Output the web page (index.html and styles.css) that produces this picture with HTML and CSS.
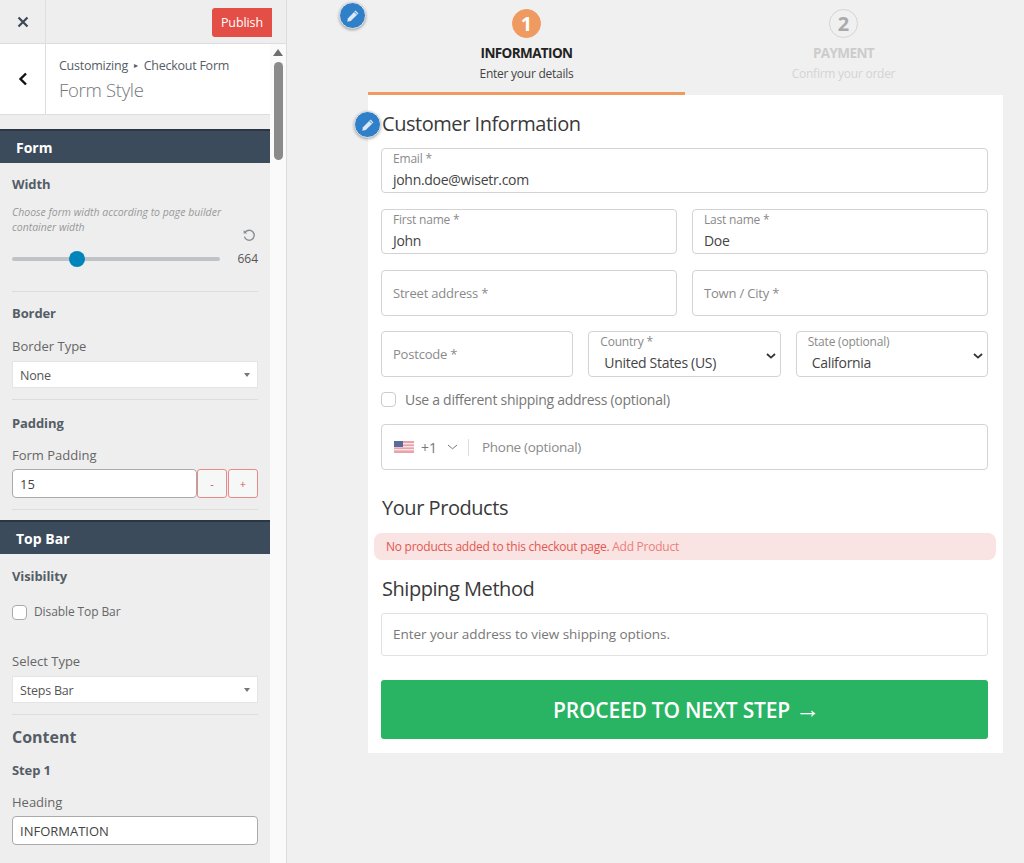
FILE: index.html
```html
<!DOCTYPE html>
<html lang="en">
<head>
  <meta charset="UTF-8">
  <meta name="viewport" content="width=device-width, initial-scale=1">
  <title>Customizing Checkout Form</title>
  <link rel="stylesheet" href="styles.css">
</head>
<body>
  <!-- Customizer sidebar -->
  <aside class="sidebar">
    <div class="topbar">
      <button class="close-btn" aria-label="Close">
        <svg width="12" height="12" viewBox="0 0 12 12"><path d="M1.5 1.5l9 9M10.5 1.5l-9 9" stroke="#3c4858" stroke-width="2.2" fill="none"/></svg>
      </button>
      <button class="publish-btn">Publish</button>
    </div>
    <div class="sidebar-body">
      <div class="panel">
        <div class="panel-head">
          <button class="back-btn" aria-label="Back">
            <svg width="10" height="14" viewBox="0 0 10 14"><path d="M8 1.5L2.5 7 8 12.5" stroke="#111" stroke-width="2.4" fill="none"/></svg>
          </button>
          <div class="panel-title">
            <div class="crumb">Customizing <span class="crumb-sep">▸</span> Checkout Form</div>
            <div class="title">Form Style</div>
          </div>
        </div>

        <h3 class="band band-form">Form</h3>
        <div class="group group-width">
          <div class="label-bold">Width</div>
          <p class="hint">Choose form width according to page builder container width</p>
          <div class="reset-row">
            <svg width="14" height="14" viewBox="0 0 14 14"><path d="M3.2 4.2A5 5 0 1 1 2.4 8.6" stroke="#8a8f94" stroke-width="1.4" fill="none"/><path d="M1.6 2v3.6h3.6z" fill="#8a8f94"/></svg>
          </div>
          <div class="slider-row">
            <div class="slider"><span class="knob"></span></div>
            <span class="slider-value">664</span>
          </div>
        </div>

        <div class="group group-border">
          <div class="label-bold">Border</div>
          <div class="label">Border Type</div>
          <div class="wp-select">None</div>
        </div>

        <div class="group group-padding">
          <div class="label-bold">Padding</div>
          <div class="label">Form Padding</div>
          <div class="stepper">
            <input class="wp-input" type="text" value="15">
            <button class="step-btn">-</button>
            <button class="step-btn">+</button>
          </div>
        </div>

        <h3 class="band band-top">Top Bar</h3>
        <div class="group group-visibility">
          <div class="label-bold">Visibility</div>
          <label class="wp-check"><input type="checkbox"> Disable Top Bar</label>
          <div class="label label-type">Select Type</div>
          <div class="wp-select">Steps Bar</div>
        </div>

        <div class="group group-content">
          <div class="label-big">Content</div>
          <div class="label-bold">Step 1</div>
          <div class="label">Heading</div>
          <input class="wp-input wide" type="text" value="INFORMATION">
        </div>
      </div>
      <div class="scrollbar">
        <span class="scroll-up"></span>
        <span class="scroll-thumb"></span>
      </div>
    </div>
  </aside>

  <!-- Checkout preview -->
  <main class="preview">
    <div class="checkout">
      <a class="edit-btn edit-steps" href="#" aria-label="Edit steps">
        <svg width="14" height="14" viewBox="0 0 14 14"><path d="M9.6 1.6l2.8 2.8-7.6 7.6-3.6.8.8-3.6z" fill="#dbe8f5"/><path d="M8.4 2.8l2.8 2.8" stroke="#2f80c8" stroke-width="1"/></svg>
      </a>
      <div class="steps">
        <div class="step active">
          <span class="step-num">1</span>
          <div class="step-name">INFORMATION</div>
          <div class="step-sub">Enter your details</div>
        </div>
        <div class="step">
          <span class="step-num">2</span>
          <div class="step-name">PAYMENT</div>
          <div class="step-sub">Confirm your order</div>
        </div>
      </div>

      <div class="card">
        <a class="edit-btn edit-form" href="#" aria-label="Edit form">
          <svg width="14" height="14" viewBox="0 0 14 14"><path d="M9.6 1.6l2.8 2.8-7.6 7.6-3.6.8.8-3.6z" fill="#dbe8f5"/><path d="M8.4 2.8l2.8 2.8" stroke="#2f80c8" stroke-width="1"/></svg>
        </a>
        <h2 class="heading heading-first">Customer Information</h2>

        <div class="field filled">
          <span class="field-label">Email *</span>
          <span class="field-value">john.doe@wisetr.com</span>
        </div>

        <div class="row two">
          <div class="field filled">
            <span class="field-label">First name *</span>
            <span class="field-value">John</span>
          </div>
          <div class="field filled">
            <span class="field-label">Last name *</span>
            <span class="field-value">Doe</span>
          </div>
        </div>

        <div class="row two">
          <div class="field empty">Street address *</div>
          <div class="field empty">Town / City *</div>
        </div>

        <div class="row three">
          <div class="field empty">Postcode *</div>
          <div class="field filled select">
            <span class="field-label">Country *</span>
            <span class="field-value">United States (US)</span>
            <svg class="chevron" width="10" height="6" viewBox="0 0 10 6"><path d="M1 1l4 3.6L9 1" stroke="#333" stroke-width="1.8" fill="none"/></svg>
          </div>
          <div class="field filled select">
            <span class="field-label">State (optional)</span>
            <span class="field-value">California</span>
            <svg class="chevron" width="10" height="6" viewBox="0 0 10 6"><path d="M1 1l4 3.6L9 1" stroke="#333" stroke-width="1.8" fill="none"/></svg>
          </div>
        </div>

        <label class="ship-check"><input type="checkbox"> Use a different shipping address (optional)</label>

        <div class="field phone">
          <svg class="flag" width="20" height="12" viewBox="0 0 20 12">
            <rect width="20" height="12" fill="#e9a3a8"/>
            <rect y="2" width="20" height="1.4" fill="#f8e6e6"/>
            <rect y="5" width="20" height="1.4" fill="#f8e6e6"/>
            <rect y="8" width="20" height="1.4" fill="#f8e6e6"/>
            <rect width="9" height="6" fill="#5a6a9c"/>
          </svg>
          <span class="dial">+1</span>
          <svg class="dial-arrow" width="11" height="6" viewBox="0 0 11 6"><path d="M1 1l4.5 3.8L10 1" stroke="#777" stroke-width="1" fill="none"/></svg>
          <span class="phone-sep"></span>
          <span class="phone-text">Phone (optional)</span>
        </div>

        <h2 class="heading heading-products">Your Products</h2>
        <div class="notice">No products added to this checkout page. <a href="#">Add Product</a></div>

        <h2 class="heading heading-shipping">Shipping Method</h2>
        <div class="ship-box">Enter your address to view shipping options.</div>

        <button class="next-btn">PROCEED TO NEXT STEP <span class="next-arrow">→</span></button>
      </div>
    </div>
  </main>
</body>
</html>
```

FILE: styles.css
```css
* {
  box-sizing: border-box;
}
html, body {
  height: 100%;
}
body {
  margin: 0;
  display: flex;
  height: 863px;
  overflow: hidden;
  font-family: "Open Sans", Arial, sans-serif;
  background: #f0f0f0;
  color: #555d66;
}
button {
  font-family: inherit;
}

/* Sidebar */
.sidebar {
  width: 287px;
  flex: none;
  display: flex;
  flex-direction: column;
  background: #eee;
  border-right: 1px solid #ddd;
}
.topbar {
  height: 44px;
  flex: none;
  display: flex;
  align-items: flex-start;
  justify-content: space-between;
  border-bottom: 1px solid #ddd;
  padding-right: 14px;
}
.close-btn {
  width: 46px;
  height: 43px;
  border: none;
  border-right: 1px solid #ddd;
  background: none;
  display: flex;
  align-items: center;
  justify-content: center;
  padding: 0;
}
.publish-btn {
  margin-top: 8px;
  width: 60px;
  height: 29px;
  padding: 0;
  border: none;
  border-radius: 3px 0 0 3px;
  background: #e34e46;
  color: #fff;
  font-size: 12.5px;
  letter-spacing: -0.1px;
}
.sidebar-body {
  flex: 1;
  display: flex;
  min-height: 0;
}
.panel {
  width: 270px;
  flex: none;
}
.scrollbar {
  width: 16px;
  flex: none;
  background: #fafafa;
  display: flex;
  flex-direction: column;
  align-items: center;
}
.scroll-up {
  margin-top: 5px;
  border-left: 5.5px solid transparent;
  border-right: 5.5px solid transparent;
  border-bottom: 7px solid #6e6e6e;
}
.scroll-thumb {
  margin-top: 6px;
  width: 9px;
  height: 98px;
  border-radius: 5px;
  background: #8a8a8a;
}
.panel-head {
  height: 71px;
  display: flex;
  background: #fff;
  border-bottom: 1px solid #ddd;
}
.back-btn {
  width: 46px;
  flex: none;
  border: none;
  border-right: 1px solid #ddd;
  background: none;
  padding: 0;
  display: flex;
  align-items: center;
  justify-content: center;
}
.panel-title {
  padding: 12px 0 0 13px;
}
.crumb {
  font-size: 12.5px;
  line-height: 18px;
  letter-spacing: -0.25px;
  color: #555d66;
}
.crumb-sep {
  font-size: 8px;
  vertical-align: 2px;
  margin: 0 3px;
}
.title {
  font-size: 18.5px;
  font-weight: 300;
  line-height: 26px;
  margin-top: 2px;
  letter-spacing: -0.3px;
  color: #72777c;
}
.band {
  margin: 0;
  height: 34px;
  padding-left: 16px;
  background: #3c4b5c;
  border-top: 2px solid #2c3642;
  color: #fff;
  font-size: 14px;
  font-weight: 700;
  line-height: 33px;
}
.band-form {
  margin-top: 14px;
}
.group {
  margin: 0 12px;
  border-bottom: 1px solid #ddd;
}
.label-bold {
  font-size: 13px;
  font-weight: 700;
  line-height: 18px;
  letter-spacing: -0.1px;
  color: #555d66;
}
.label {
  font-size: 13px;
  line-height: 18px;
  color: #666;
}
.label-big {
  font-size: 16px;
  font-weight: 700;
  line-height: 22px;
  color: #555d66;
}
.hint {
  margin: 12px 0 0;
  font-size: 10.5px;
  font-style: italic;
  line-height: 15px;
  color: #999;
}
.group-width {
  height: 129px;
  padding-top: 12px;
}
.reset-row {
  display: flex;
  justify-content: flex-end;
  height: 14px;
  margin-top: -7px;
  padding-right: 2px;
}
.slider-row {
  display: flex;
  align-items: center;
  justify-content: space-between;
  margin-top: 9px;
}
.slider {
  position: relative;
  width: 208px;
  height: 4px;
  border-radius: 2px;
  background: #bdc3c7;
}
.knob {
  position: absolute;
  left: 57px;
  top: -6px;
  width: 16px;
  height: 16px;
  border-radius: 50%;
  background: #0085ba;
}
.slider-value {
  font-size: 12px;
  line-height: 16px;
  color: #555;
}
.group-border {
  height: 108px;
  padding-top: 12px;
}
.group-border .label {
  margin-top: 15px;
}
.wp-select {
  position: relative;
  height: 27px;
  margin-top: 6px;
  padding: 1px 0 0 7px;
  background: #fff;
  border: 1px solid #e4e4e4;
  font-size: 12.5px;
  letter-spacing: -0.2px;
  line-height: 25px;
  color: #555;
}
.wp-select::after {
  content: "";
  position: absolute;
  right: 7px;
  top: 11px;
  border-left: 3.5px solid transparent;
  border-right: 3.5px solid transparent;
  border-top: 4px solid #777;
}
.group-padding {
  height: 110px;
  padding-top: 14px;
}
.group-padding .label {
  margin-top: 14px;
}
.stepper {
  display: flex;
  margin-top: 5px;
}
.wp-input {
  flex: none;
  height: 29px;
  width: 185px;
  padding: 0 7px;
  border: 1px solid #aaa;
  border-radius: 4px;
  background: #fff;
  font-family: inherit;
  font-size: 13px;
  color: #444;
}
.wp-input.wide {
  width: 100%;
  margin-top: 5px;
}
.step-btn {
  flex: none;
  width: 30px;
  height: 29px;
  padding: 0;
  border: 1px solid #e98a8a;
  border-radius: 3px;
  background: #f6f7f7;
  color: #e34e46;
  font-size: 11px;
}
.step-btn + .step-btn {
  margin-left: 1px;
}
.band-top {
  margin-top: 10px;
}
.group-visibility {
  height: 161px;
  padding-top: 13px;
}
.wp-check {
  display: flex;
  align-items: center;
  gap: 7px;
  margin-top: 18px;
  font-size: 12px;
  letter-spacing: -0.1px;
  line-height: 18px;
  color: #666;
}
.wp-check input, .ship-check input {
  appearance: none;
  flex: none;
  margin: 0;
  width: 15px;
  height: 15px;
  background: #fff;
  border: 1px solid #aaa;
  border-radius: 4px;
}
.ship-check input {
  border-color: #ccc;
}
.label-type {
  margin-top: 31px;
}
.group-content {
  border-bottom: none;
  padding-top: 11px;
}
.group-content .label-bold {
  margin-top: 13px;
}
.group-content .label {
  margin-top: 14px;
}

/* Checkout preview */
.preview {
  flex: 1;
  padding-left: 81px;
  min-width: 0;
}
.checkout {
  position: relative;
  width: 635px;
}
.edit-btn {
  position: absolute;
  width: 27px;
  height: 27px;
  border-radius: 50%;
  background: #2f80c8;
  border: 1px solid #e8e8e8;
  box-shadow: 0 1px 3px rgba(0, 0, 0, 0.35);
  display: flex;
  align-items: center;
  justify-content: center;
}
.edit-steps {
  left: -29px;
  top: 2px;
}
.edit-form {
  left: -14px;
  top: 16px;
}
.steps {
  display: flex;
  height: 95px;
}
.step {
  width: 317px;
  padding-top: 9px;
  text-align: center;
  color: #d4d4d4;
}
.step.active {
  border-bottom: 3px solid #ef9a61;
  color: #222;
}
.step-num {
  display: block;
  width: 29px;
  height: 29px;
  margin: 0 auto;
  border: 1px solid #d4d4d4;
  border-radius: 50%;
  color: #aaa;
  font-size: 20px;
  font-weight: 700;
  line-height: 27px;
}
.step.active .step-num {
  background: #ef9a61;
  border-color: #ef9a61;
  color: #fff;
}
.step-name {
  margin-top: 6px;
  font-size: 13.5px;
  font-weight: 700;
  line-height: 19px;
  letter-spacing: -0.6px;
}
.step:not(.active) .step-name {
  color: #ccc;
}
.step-sub {
  margin-top: 2px;
  font-size: 12px;
  line-height: 17px;
  letter-spacing: -0.25px;
}
.step.active .step-sub {
  color: #444;
}
.card {
  position: relative;
  height: 658px;
  padding: 0 15px 0 13px;
  background: #fff;
}
.heading {
  margin: 0;
  padding-left: 1px;
  font-size: 20px;
  font-weight: 400;
  line-height: 28px;
  letter-spacing: -0.45px;
  color: #3a3a3a;
}
.heading-first {
  padding-top: 15px;
  height: 53px;
}
.field {
  position: relative;
  height: 45px;
  border: 1px solid #d3d3d3;
  border-radius: 4px;
  background: #fff;
}
.field-label {
  display: block;
  padding: 2px 11px 0;
  font-size: 12px;
  line-height: 16px;
  letter-spacing: -0.2px;
  color: #8a8a8a;
}
.field-value {
  display: block;
  padding: 3px 11px 0;
  font-size: 14px;
  line-height: 19px;
  letter-spacing: -0.3px;
  color: #444;
}
.select .field-value {
  padding-left: 15px;
}
.chevron {
  position: absolute;
  right: 4px;
  top: 21px;
}
.empty {
  display: flex;
  align-items: center;
  padding-left: 11px;
  height: 46px;
  font-size: 13px;
  letter-spacing: -0.2px;
  color: #8a8a8a;
}
.row {
  display: grid;
  gap: 15px;
  margin-top: 16px;
}
.row.two {
  grid-template-columns: 1fr 1fr;
}
.row.three {
  grid-template-columns: 1fr 1fr 1fr;
  margin-top: 15px;
}
.row.three .field {
  height: 46px;
}
.ship-check {
  display: flex;
  align-items: center;
  gap: 9px;
  height: 20px;
  margin-top: 12px;
  font-size: 14px;
  letter-spacing: -0.28px;
  color: #777;
}
.phone {
  display: flex;
  align-items: center;
  height: 46px;
  margin-top: 15px;
  padding-left: 12px;
}
.dial {
  margin-left: 7px;
  font-size: 14px;
  color: #777;
}
.dial-arrow {
  margin-left: 10px;
}
.phone-sep {
  width: 1px;
  height: 17px;
  margin: 0 13px 0 10px;
  background: #ddd;
}
.phone-text {
  font-size: 13.5px;
  letter-spacing: -0.3px;
  color: #8a8a8a;
}
.heading-products {
  margin-top: 24px;
}
.notice {
  height: 27px;
  margin: 11px -8px 0 -7px;
  padding-left: 12px;
  border-radius: 8px;
  background: #fae3e3;
  color: #e2584f;
  font-size: 12px;
  letter-spacing: -0.25px;
  line-height: 27px;
}
.notice a {
  color: #ea8079;
  text-decoration: none;
}
.heading-shipping {
  margin-top: 15px;
}
.ship-box {
  height: 43px;
  margin-top: 10px;
  padding-left: 11px;
  border: 1px solid #e2e2e2;
  border-radius: 3px;
  font-size: 13.5px;
  letter-spacing: -0.05px;
  line-height: 41px;
  color: #777;
}
.next-btn {
  display: block;
  width: 100%;
  height: 59px;
  margin-top: 24px;
  padding: 0 0 0 4px;
  border: none;
  border-radius: 3px;
  background: #28b463;
  color: #fff;
  font-size: 21px;
  font-weight: 600;
  letter-spacing: -0.2px;
}
.next-arrow {
  font-family: "Liberation Sans", Arial, sans-serif;
  font-size: 25px;
  font-weight: 400;
  line-height: 1;
}
```
